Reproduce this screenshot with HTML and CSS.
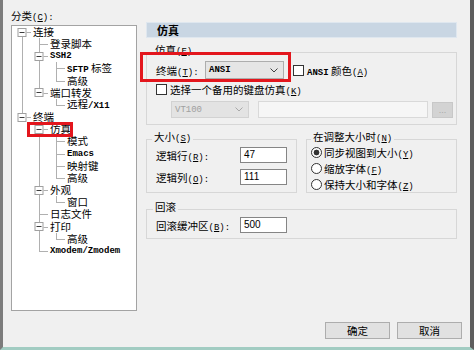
FILE: index.html
```html
<!DOCTYPE html>
<html>
<head>
<meta charset="utf-8">
<link rel="stylesheet" href="styles.css">
</head>
<body>
<div class="window">
  <div class="main">
    <div class="left">
      <div class="cap">分类<span class="m">(<u>C</u>):</span></div>
      <div class="tree">
        <div class="row"><span class="c f"><i class="bx"></i></span><span class="tx">连接</span></div>
        <div class="row"><span class="c v"></span><span class="c t"></span><span class="tx">登录脚本</span></div>
        <div class="row"><span class="c v"></span><span class="c t"><i class="bx"></i></span><span class="tx mt">SSH2</span></div>
        <div class="row"><span class="c v"></span><span class="c v"></span><span class="c t"></span><span class="tx"><span class="mt">SFTP</span> 标签</span></div>
        <div class="row"><span class="c v"></span><span class="c v"></span><span class="c l"></span><span class="tx">高级</span></div>
        <div class="row"><span class="c v"></span><span class="c l"><i class="bx"></i></span><span class="tx">端口转发</span></div>
        <div class="row"><span class="c v"></span><span class="c"></span><span class="c l"></span><span class="tx">远程<span class="mt">/X11</span></span></div>
        <div class="row"><span class="c l"><i class="bx"></i></span><span class="tx">终端</span></div>
        <div class="row"><span class="c"></span><span class="c t"><i class="bx"></i></span><span class="tx">仿真</span></div>
        <div class="row"><span class="c"></span><span class="c v"></span><span class="c t"></span><span class="tx">模式</span></div>
        <div class="row"><span class="c"></span><span class="c v"></span><span class="c t"></span><span class="tx mt">Emacs</span></div>
        <div class="row"><span class="c"></span><span class="c v"></span><span class="c t"></span><span class="tx">映射键</span></div>
        <div class="row"><span class="c"></span><span class="c v"></span><span class="c l"></span><span class="tx">高级</span></div>
        <div class="row"><span class="c"></span><span class="c t"><i class="bx"></i></span><span class="tx">外观</span></div>
        <div class="row"><span class="c"></span><span class="c v"></span><span class="c l"></span><span class="tx">窗口</span></div>
        <div class="row"><span class="c"></span><span class="c t"></span><span class="tx">日志文件</span></div>
        <div class="row"><span class="c"></span><span class="c t"><i class="bx"></i></span><span class="tx">打印</span></div>
        <div class="row"><span class="c"></span><span class="c v"></span><span class="c l"></span><span class="tx">高级</span></div>
        <div class="row"><span class="c"></span><span class="c l"></span><span class="tx mt">Xmodem/Zmodem</span></div>
      </div>
    </div>
    <div class="right">
      <div class="head">仿真</div>
      <div class="group g1">
        <span class="lg">仿真<span class="m">(<u>E</u>)</span></span>
        <div class="rowA">
          <span class="lbl">终端<span class="m">(<u>T</u>):</span></span>
          <span class="combo"><span class="mv">ANSI</span><svg class="chev" width="8" height="5" viewBox="0 0 8 5"><polyline points="0.5,0.5 4,4 7.5,0.5" fill="none" stroke="#404040" stroke-width="1"/></svg></span>
          <span class="cb cb1"></span><span class="cbt"><span class="mv">ANSI</span> 颜色<span class="m">(<u>A</u>)</span></span>
        </div>
        <div class="rowB">
          <span class="cb"></span><span class="cbt">选择一个备用的键盘仿真<span class="m">(<u>K</u>)</span></span>
        </div>
        <div class="rowC">
          <span class="combo dis"><span class="mv">VT100</span><svg class="chev" width="8" height="5" viewBox="0 0 8 5"><polyline points="0.5,0.5 4,4 7.5,0.5" fill="none" stroke="#a8a8a8" stroke-width="1"/></svg></span>
          <span class="field"></span>
          <span class="dots">...</span>
        </div>
      </div>
      <div class="pair">
        <div class="group g2">
          <span class="lg">大小<span class="m">(<u>S</u>)</span></span>
          <div class="frow r1"><span>逻辑行<span class="m">(<u>R</u>):</span></span><span class="inp">47</span></div>
          <div class="frow r2"><span>逻辑列<span class="m">(<u>O</u>):</span></span><span class="inp">111</span></div>
        </div>
        <div class="group g3">
          <span class="lg">在调整大小时<span class="m">(<u>N</u>)</span></span>
          <div class="rrow"><span class="rd on"></span><span>同步视图到大小<span class="m">(<u>Y</u>)</span></span></div>
          <div class="rrow"><span class="rd"></span><span>缩放字体<span class="m">(<u>F</u>)</span></span></div>
          <div class="rrow"><span class="rd"></span><span>保持大小和字体<span class="m">(<u>Z</u>)</span></span></div>
        </div>
      </div>
      <div class="group g4">
        <span class="lg">回滚</span>
        <div class="frow r1"><span>回滚缓冲区<span class="m">(<u>B</u>):</span></span><span class="inp">500</span></div>
      </div>
    </div>
  </div>
  <div class="footer">
    <span class="btn">确定</span>
    <span class="btn">取消</span>
  </div>
  <div class="mark mark-tree"></div>
  <div class="mark mark-term"></div>
</div>
</body>
</html>
```
FILE: styles.css
```css
body {
  margin: 0;
  background: #f0f0f0;
}
.window {
  position: relative;
  width: 474px;
  height: 350px;
  box-sizing: border-box;
  border-left: 3px solid #7c7c7c;
  border-right: 4px solid #5e5e5e;
  border-bottom: 3px solid #a2ccc2;
  background: #f0f0f0;
  display: flex;
  flex-direction: column;
  font-family: "Noto Sans CJK SC", sans-serif;
  font-size: 10.5px;
  color: #000;
  overflow: hidden;
}
.m {
  font-family: "Liberation Mono", "Noto Sans CJK SC", monospace;
  font-size: 9px;
}
.mv {
  font-family: "Liberation Mono", monospace;
  font-size: 9px;
  font-weight: bold;
}
.main {
  flex: 1;
  display: flex;
  min-height: 0;
}
.left {
  flex: none;
  width: 134px;
  box-sizing: border-box;
  padding: 8px 0 0 8px;
}
.cap {
  height: 15px;
  line-height: 15px;
  white-space: nowrap;
}
.tree {
  margin-top: 2px;
  width: 126px;
  height: 286px;
  box-sizing: border-box;
  border: 1px solid #a3a3a3;
  background: #fff;
  padding: 0 0 0 2px;
}
.row {
  display: flex;
  align-items: center;
  height: 12.17px;
}
.c {
  flex: none;
  width: 17px;
  height: 100%;
  display: flex;
  align-items: center;
  justify-content: center;
  --ln: #b0b0b0;
}
.c.v {
  background: linear-gradient(var(--ln), var(--ln)) 8px 0 / 1px 100% no-repeat;
}
.c.t {
  background:
    linear-gradient(var(--ln), var(--ln)) 8px 0 / 1px 100% no-repeat,
    linear-gradient(var(--ln), var(--ln)) 8px 6px / 9px 1px no-repeat;
}
.c.l {
  background:
    linear-gradient(var(--ln), var(--ln)) 8px 0 / 1px 6px no-repeat,
    linear-gradient(var(--ln), var(--ln)) 8px 6px / 9px 1px no-repeat;
}
.c.f {
  background:
    linear-gradient(var(--ln), var(--ln)) 8px 6px / 1px 7px no-repeat,
    linear-gradient(var(--ln), var(--ln)) 8px 6px / 9px 1px no-repeat;
}
.bx {
  display: block;
  width: 9px;
  height: 9px;
  box-sizing: border-box;
  border: 1px solid #a0a0a0;
  background: linear-gradient(#3c3c3c, #3c3c3c) center / 5px 1px no-repeat, #fff;
  margin-right: 0;
  transform: translateX(-0.5px);
}
.tx {
  margin-left: 2px;
  white-space: nowrap;
  line-height: 12px;
}
.mt {
  font-family: "Liberation Mono", monospace;
  font-size: 9px;
  font-weight: bold;
}
.right {
  flex: 1;
  min-width: 0;
  padding: 22px 13px 0 9px;
}
.head {
  height: 16px;
  box-sizing: border-box;
  background: #c9d6e3;
  border: 1px solid #dfe7ef;
  padding-left: 10px;
  font-weight: bold;
  font-size: 11px;
  line-height: 14px;
}
.group {
  border: 1px solid #d7d7d7;
}
.lg {
  display: block;
  width: max-content;
  height: 14px;
  line-height: 14px;
  margin: -10px 0 0 -3px;
  padding: 0 2px;
  background: #f0f0f0;
  white-space: nowrap;
}
.g1 {
  margin-top: 14px;
  padding: 0 0 6px 9px;
}
.rowA {
  display: flex;
  align-items: center;
  height: 18px;
  margin-top: 4px;
}
.lbl {
  width: 49px;
  flex: none;
  white-space: nowrap;
}
.combo {
  display: flex;
  align-items: center;
  box-sizing: border-box;
  width: 79px;
  height: 18px;
  border: 1px solid #adadad;
  background: #e5e5e5;
  padding: 0 5px 0 3px;
}
.chev {
  margin-left: auto;
  display: block;
}
.cb {
  flex: none;
  display: block;
  width: 11px;
  height: 11px;
  box-sizing: border-box;
  border: 1px solid #333;
  background: #fff;
}
.cb1 {
  margin-left: 9px;
}
.cbt {
  margin-left: 3px;
  white-space: nowrap;
}
.rowB {
  display: flex;
  align-items: center;
  height: 14px;
  margin-top: 3px;
}
.rowC {
  display: flex;
  align-items: center;
  height: 17px;
  margin-top: 5px;
  padding-left: 15px;
}
.combo.dis {
  width: 78px;
  height: 17px;
  border-color: #d2d2d2;
  background: #e3e3e3;
  color: #a0a0a0;
}
.combo.dis .mv {
  font-weight: normal;
}
.field {
  display: block;
  margin-left: 9px;
  width: 170px;
  height: 17px;
  box-sizing: border-box;
  border: 1px solid #d9d9d9;
  background: #f6f6f6;
}
.dots {
  display: flex;
  align-items: center;
  justify-content: center;
  margin-left: 4px;
  width: 21px;
  height: 16px;
  box-sizing: border-box;
  border: 1px solid #c8c8c8;
  background: #d3d3d3;
  color: #a8a8a8;
  font-family: "Liberation Sans", sans-serif;
  font-size: 9px;
}
.pair {
  display: grid;
  grid-template-columns: 151px 151px;
  column-gap: 9px;
  margin-top: 14px;
}
.g2 {
  padding: 0 0 7px 9px;
}
.g2 .lg {
  margin-left: -4px;
}
.frow {
  display: grid;
  grid-template-columns: 84px 47px;
  align-items: center;
  height: 16px;
  white-space: nowrap;
}
.frow.r1 {
  margin-top: 3px;
}
.frow.r2 {
  margin-top: 6px;
}
.inp {
  display: block;
  height: 16px;
  box-sizing: border-box;
  border: 1px solid #858585;
  background: #fff;
  padding-left: 3px;
  font-family: "Liberation Sans", sans-serif;
  font-size: 10px;
  line-height: 14px;
}
.g3 {
  padding: 0 0 0 4px;
}
.g3 .lg {
  margin-left: 0;
}
.rrow {
  display: flex;
  align-items: center;
  height: 16px;
  white-space: nowrap;
}
.rd {
  flex: none;
  display: block;
  width: 11px;
  height: 11px;
  box-sizing: border-box;
  border: 1px solid #333;
  border-radius: 50%;
  background: #fff;
  margin-right: 2px;
}
.rd.on {
  background: radial-gradient(circle, #333 0 2.6px, #fff 3.2px);
}
.g4 {
  margin-top: 16px;
  padding: 0 0 5px 9px;
}
.footer {
  display: flex;
  justify-content: flex-end;
  gap: 7px;
  padding: 0 8px 8px 0;
}
.btn {
  display: flex;
  align-items: center;
  justify-content: center;
  width: 65px;
  height: 17px;
  box-sizing: border-box;
  border: 1px solid #adadad;
  background: #e1e1e1;
}
.mark {
  position: absolute;
  box-sizing: border-box;
  border: 3px solid #e3161d;
}
.mark-tree {
  left: 24px;
  top: 122px;
  width: 46px;
  height: 15px;
}
.mark-term {
  left: 137px;
  top: 52px;
  width: 151px;
  height: 30px;
}
```
